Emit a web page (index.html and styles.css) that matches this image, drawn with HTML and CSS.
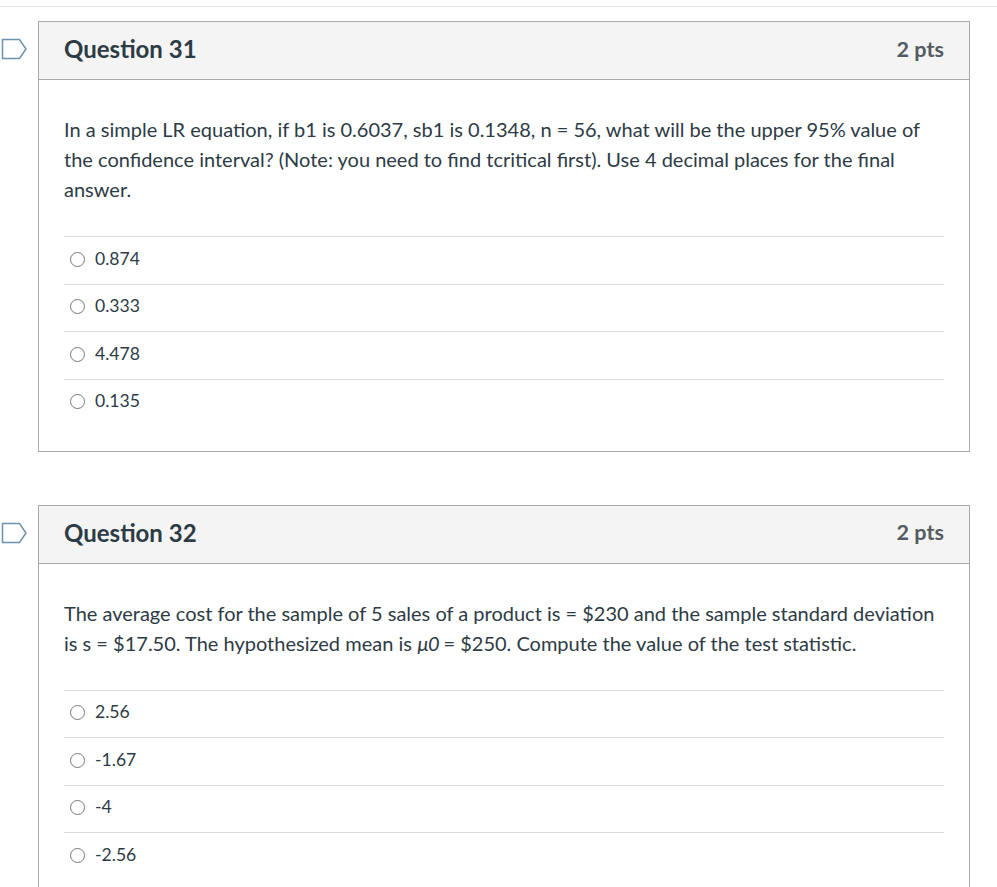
FILE: index.html
```html
<html>

<head>
  <link rel="stylesheet" href="styles.css">
  <title>Quiz</title>
</head>

<body>
  <div class="top-rule"></div>

  <div class="question">
    <svg class="flag" width="26" height="22" viewBox="0 0 26 22">
      <path d="M1.5 1.5H18.500L25 11L18.500 20.500H1.500Z" fill="#fff" stroke="#6a93ad" stroke-width="1.500" />
    </svg>
    <div class="question-head">
      <div class="question-name">Question 31</div>
      <div class="question-pts">2 pts</div>
    </div>
    <div class="question-body">
      <div class="question-text">In a simple LR equation, if b1 is 0.6037, sb1 is 0.1348, n = 56, what will be the upper 95% value of the confidence interval? (Note: you need to find tcritical first). Use 4 decimal places for the final answer.</div>
      <div class="answers">
        <div class="answer"><span class="radio"></span>0.874</div>
        <div class="answer"><span class="radio"></span>0.333</div>
        <div class="answer"><span class="radio"></span>4.478</div>
        <div class="answer"><span class="radio"></span>0.135</div>
      </div>
    </div>
  </div>

  <div class="question">
    <svg class="flag" width="26" height="22" viewBox="0 0 26 22">
      <path d="M1.5 1.5H18.500L25 11L18.500 20.500H1.500Z" fill="#fff" stroke="#6a93ad" stroke-width="1.500" />
    </svg>
    <div class="question-head">
      <div class="question-name">Question 32</div>
      <div class="question-pts">2 pts</div>
    </div>
    <div class="question-body">
      <div class="question-text">The average cost for the sample of 5 sales of a product is = $230 and the sample standard deviation<br>is s = $17.50. The hypothesized mean is <i class="symbol">µ0</i> = $250. Compute the value of the test statistic.</div>
      <div class="answers">
        <div class="answer"><span class="radio"></span>2.56</div>
        <div class="answer"><span class="radio"></span>-1.67</div>
        <div class="answer"><span class="radio"></span>-4</div>
        <div class="answer"><span class="radio"></span>-2.56</div>
      </div>
    </div>
  </div>
</body>

</html>
```

FILE: styles.css
```css
html, body {
  height: 887px;
  overflow: hidden;
}

body {
  margin: 0;
  padding-top: 6px;
  box-sizing: border-box;
  background: #fff;
  font-family: Lato, sans-serif;
  color: #2d3b45;
}

.top-rule {
  height: 1px;
  background: #e2e2e2;
  margin-bottom: 14px;
}

.question {
  position: relative;
  width: 932px;
  margin: 0 0 52.600px 38px;
  box-sizing: border-box;
  border: 1px solid #a9a9a9;
}

.flag {
  position: absolute;
  left: -38px;
  top: 16px;
}

.question-head {
  display: flex;
  justify-content: space-between;
  align-items: center;
  padding: 0 25px 4px;
  box-sizing: border-box;
  height: 58px;
  background: #f4f4f4;
  border-bottom: 1px solid #a9a9a9;
  font-size: 24px;
  font-weight: bold;
}

.question-pts {
  font-size: 21.600px;
  color: #555b60;
}

.question-body {
  padding: 34px 25px 25px;
}

.question-text {
  font-size: 20px;
  line-height: 30px;
  margin-bottom: 32px;
}

.symbol {
  letter-spacing: -1.200px;
}

.answer {
  display: flex;
  align-items: center;
  height: 47.5px;
  box-sizing: border-box;
  border-top: 1px solid #dcdcdc;
  padding: 0 0 4px 6px;
  font-size: 17.600px;
}

.radio {
  width: 15px;
  height: 15px;
  box-sizing: border-box;
  margin: 2px 10px 0 0;
  border: 1.500px solid #767676;
  border-radius: 50%;
}
```
